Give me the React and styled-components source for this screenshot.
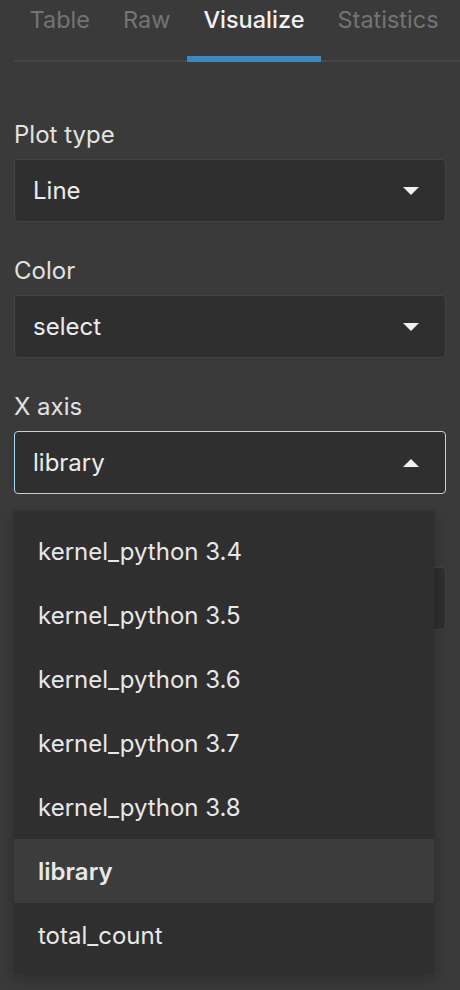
import React from "react";
import styled, { createGlobalStyle } from "styled-components";

const Global = createGlobalStyle`
  html, body { margin: 0; padding: 0; background: #3a3a3a; }
  body { font-family: Inter, "Noto Sans", sans-serif; color: #e6e6e6; }
  * { box-sizing: border-box; }
`;

const Page = styled.div`
  width: 460px;
  height: 990px;
  overflow: hidden;
  background: #3a3a3a;
  position: relative;
`;

const TabBar = styled.div`
  display: flex;
  margin-left: 14px;
  height: 62px;
  border-bottom: 2px solid #454545;
  white-space: nowrap;
`;

const Tab = styled.div`
  padding: 4px 16.5px 0;
  font-size: 23.5px;
  line-height: 32px;
  color: ${(p) => (p.$active ? "#f2f2f2" : "#747474")};
  font-weight: ${(p) => (p.$active ? 500 : 400)};
  position: relative;
  &:first-child {
    margin-left: -1px;
  }
  &::after {
    content: "";
    display: ${(p) => (p.$active ? "block" : "none")};
    position: absolute;
    left: 0;
    right: 0;
    bottom: -2px;
    height: 6px;
    background: #3f88bf;
  }
`;

const Form = styled.div`
  padding: 61px 14px 0;
  display: flex;
  flex-direction: column;
  gap: 37px;
`;

const Field = styled.div`
  display: flex;
  flex-direction: column;
  gap: 12px;
  position: relative;
`;

const Label = styled.div`
  font-size: 24px;
  line-height: 24px;
  height: 24px;
  color: #e2e2e2;
`;

const Select = styled.div`
  height: 63px;
  display: flex;
  align-items: center;
  justify-content: space-between;
  padding: 0 26px 0 18px;
  background: #2f2f2f;
  border: 1px solid ${(p) => (p.$focused ? "#a6dbf3" : "#444444")};
  border-radius: 4px;
  font-size: 24px;
  color: #ececec;
`;

const Caret = ({ up }) => (
  <svg width="16" height="8" viewBox="0 0 16 8">
    {up ? (
      <polygon points="0,8 16,8 8,0" fill="#f0f0f0" />
    ) : (
      <polygon points="0,0 16,0 8,8" fill="#f0f0f0" />
    )}
  </svg>
);

const Menu = styled.div`
  position: absolute;
  left: 0;
  top: calc(100% + 17px);
  width: 420px;
  padding: 8px 0 7px;
  background: #2f2f2f;
  box-shadow: 0 4px 14px rgba(0, 0, 0, 0.25);
  z-index: 10;
`;

const Item = styled.div`
  height: 64px;
  display: flex;
  align-items: center;
  padding-left: 24px;
  font-size: 24px;
  color: #e8e8e8;
  background: ${(p) => (p.$selected ? "#3c3c3c" : "transparent")};
  font-weight: ${(p) => (p.$selected ? 600 : 400)};
`;

const items = [
  "kernel_python 3.4",
  "kernel_python 3.5",
  "kernel_python 3.6",
  "kernel_python 3.7",
  "kernel_python 3.8",
  "library",
  "total_count",
];

export default function App() {
  return (
    <Page>
      <Global />
      <TabBar>
        <Tab>Table</Tab>
        <Tab>Raw</Tab>
        <Tab $active>Visualize</Tab>
        <Tab>Statistics</Tab>
      </TabBar>
      <Form>
        <Field>
          <Label>Plot type</Label>
          <Select>
            Line
            <Caret />
          </Select>
        </Field>
        <Field>
          <Label>Color</Label>
          <Select>
            select
            <Caret />
          </Select>
        </Field>
        <Field>
          <Label>X axis</Label>
          <Select $focused>
            library
            <Caret up />
          </Select>
          <Menu>
            {items.map((it) => (
              <Item key={it} $selected={it === "library"}>
                {it}
              </Item>
            ))}
          </Menu>
        </Field>
        <Field>
          <Label />
          <Select />
        </Field>
      </Form>
    </Page>
  );
}
